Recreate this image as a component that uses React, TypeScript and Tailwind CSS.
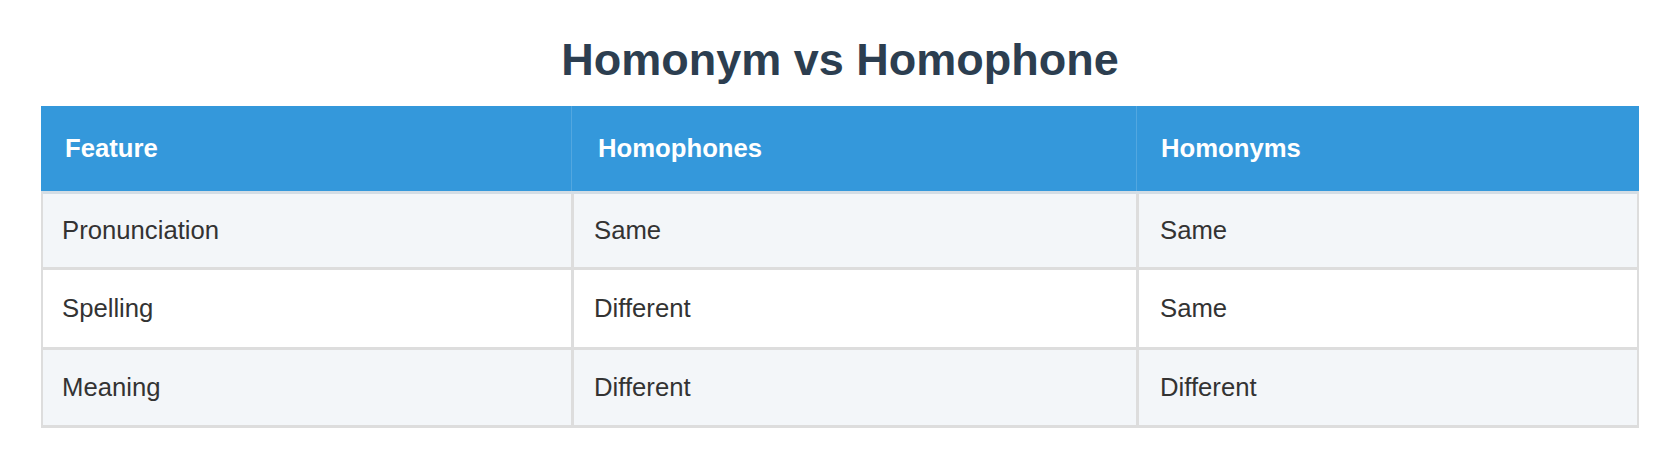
import React from "react";

const rows = [
  { f: "Pronunciation", a: "Same", b: "Same", h: "h-[73px]", bg: "bg-[#f3f6f9]" },
  { f: "Spelling", a: "Different", b: "Same", h: "h-[80px]", bg: "bg-white" },
  { f: "Meaning", a: "Different", b: "Different", h: "h-[78px]", bg: "bg-[#f3f6f9]" },
];

export default function App() {
  return (
    <div className="w-[1680px] h-[470px] bg-white pt-[37px]" style={{ fontFamily: '"Liberation Sans", Arial, sans-serif' }}>
      <h1 className="text-center text-[45px] leading-[45px] font-bold text-[#2c3e50] mb-[24px]">
        Homonym vs Homophone
      </h1>
      <div className="mx-[41px] w-[1598px] flex flex-col">
        <div className="grid grid-cols-[530px_565px_1fr] h-[85px] bg-[#3498db] text-white font-bold text-[25.7px]">
          <div className="flex items-center pl-[24px]">Feature</div>
          <div className="flex items-center pl-[26px] border-l border-[#52a7e0]">Homophones</div>
          <div className="flex items-center pl-[24px] border-l border-[#52a7e0]">Homonyms</div>
        </div>
        <div className="border-x-2 border-b-[3px] border-[#dddddd] border-t-[3px] border-t-[#d3dde5]">
          {rows.map((r, i) => (
            <div
              key={r.f}
              className={`grid grid-cols-[528px_565px_1fr] ${r.h} ${r.bg} text-[25.7px] text-[#333333] ${i > 0 ? "border-t-[3px] border-[#dddddd]" : ""}`}
            >
              <div className="flex items-center pl-[19px]">{r.f}</div>
              <div className="flex items-center pl-[20px] border-l-[3px] border-[#dddddd]">{r.a}</div>
              <div className="flex items-center pl-[21px] border-l-[3px] border-[#dddddd]">{r.b}</div>
            </div>
          ))}
        </div>
      </div>
    </div>
  );
}
